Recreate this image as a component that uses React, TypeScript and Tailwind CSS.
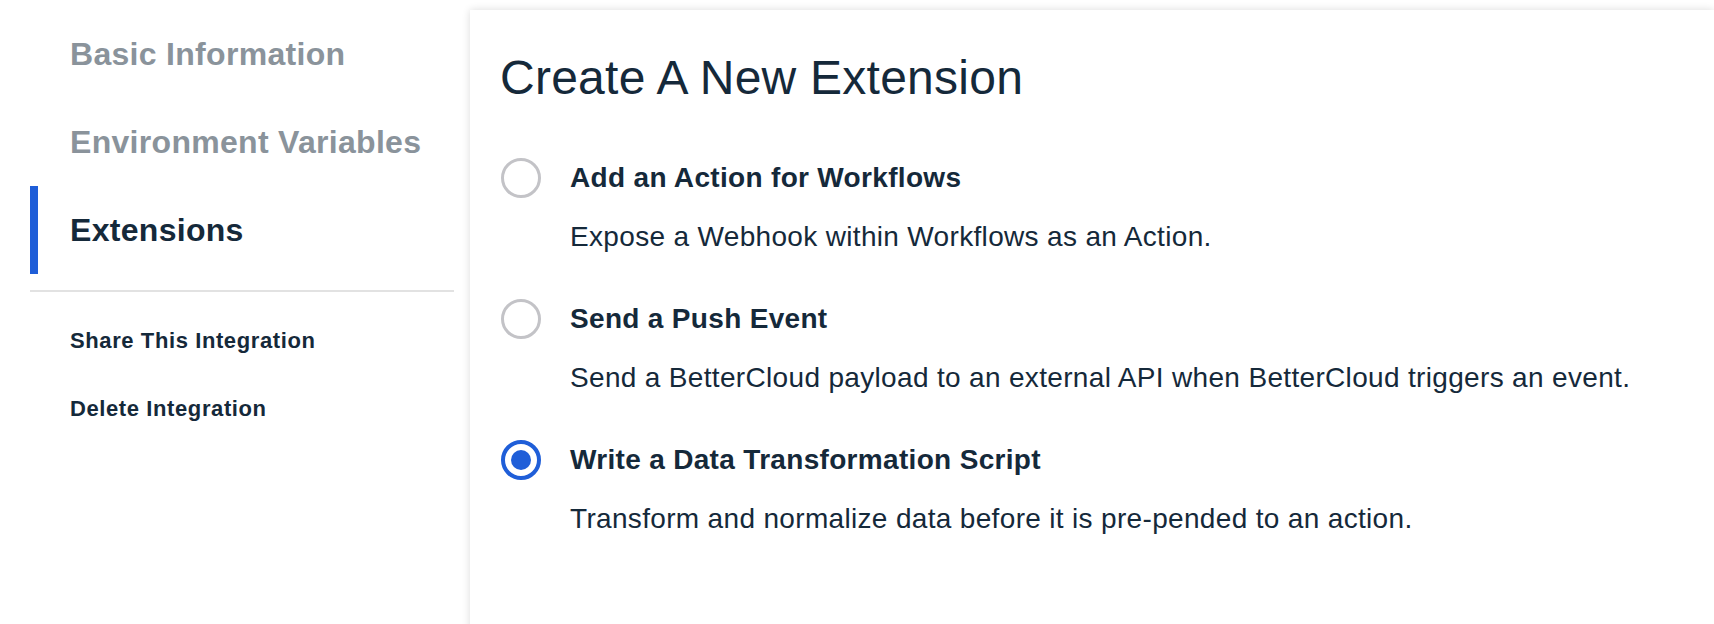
const navItems = [
  { label: "Basic Information", active: false },
  { label: "Environment Variables", active: false },
  { label: "Extensions", active: true },
];

const options = [
  {
    title: "Add an Action for Workflows",
    description: "Expose a Webhook within Workflows as an Action.",
    selected: false,
  },
  {
    title: "Send a Push Event",
    description: "Send a BetterCloud payload to an external API when BetterCloud triggers an event.",
    selected: false,
  },
  {
    title: "Write a Data Transformation Script",
    description: "Transform and normalize data before it is pre-pended to an action.",
    selected: true,
  },
];

function Radio({ selected }: { selected: boolean }) {
  if (selected) {
    return (
      <span className="w-10 h-10 rounded-full border-[4px] border-[#1f5ed8] flex items-center justify-center shrink-0">
        <span className="w-5 h-5 rounded-full bg-[#1f5ed8]" />
      </span>
    );
  }
  return <span className="w-10 h-10 rounded-full border-[3px] border-[#c3c3c7] shrink-0" />;
}

export default function App() {
  return (
    <div
      className="h-[624px] w-[1714px] overflow-hidden bg-white flex gap-4 pl-[30px] pt-[10px] text-[#15293a]"
      style={{ fontFamily: '"Liberation Sans", Arial, Helvetica, sans-serif' }}
    >
      {/* Sidebar */}
      <aside className="w-[424px] shrink-0 flex flex-col">
        <nav className="flex flex-col">
          {navItems.map(({ label, active }) => (
            <a
              key={label}
              className={
                active
                  ? "h-[88px] flex items-center border-l-[8px] border-[#1f5ed8] pl-[32px] text-[32px] font-bold tracking-[0.3px] text-[#15293a]"
                  : "h-[88px] flex items-center border-l-[8px] border-transparent pl-[32px] text-[32px] font-bold tracking-[0.3px] text-[#8a939b]"
              }
            >
              {label}
            </a>
          ))}
        </nav>

        <div className="mt-4 h-[2px] bg-[#e2e2e2]" />

        <div className="mt-[33px] flex flex-col gap-[36px] pl-[40px]">
          <a className="text-[22px] leading-[32px] font-bold tracking-[0.6px]">Share This Integration</a>
          <a className="text-[22px] leading-[32px] font-bold tracking-[0.6px]">Delete Integration</a>
        </div>
      </aside>

      {/* Main panel */}
      <main className="flex-1 h-[700px] bg-white shadow-[0_0_8px_rgba(0,0,0,0.14)] pt-[40px] pl-[30px]">
        <h1 className="text-[48px] leading-[56px] font-normal tracking-[0.25px]">Create A New Extension</h1>

        <div className="mt-[52px] flex flex-col gap-[42px]">
          {options.map((opt) => (
            <label key={opt.title} className="grid grid-cols-[40px_1fr] gap-x-[29px] pl-[1px]">
              <span className="h-10 flex items-center">
                <Radio selected={opt.selected} />
              </span>
              <span className="text-[28px] leading-[40px] font-bold tracking-[0.32px]">{opt.title}</span>
              <span />
              <span className="mt-[19px] text-[28px] leading-[40px] tracking-[0.33px]">{opt.description}</span>
            </label>
          ))}
        </div>
      </main>
    </div>
  );
}
